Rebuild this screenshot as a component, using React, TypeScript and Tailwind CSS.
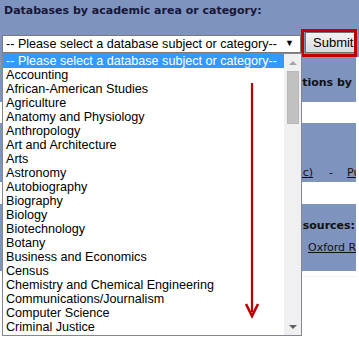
import React from 'react';

const subjects = [
  '-- Please select a database subject or category--',
  'Accounting',
  'African-American Studies',
  'Agriculture',
  'Anatomy and Physiology',
  'Anthropology',
  'Art and Architecture',
  'Arts',
  'Astronomy',
  'Autobiography',
  'Biography',
  'Biology',
  'Biotechnology',
  'Botany',
  'Business and Economics',
  'Census',
  'Chemistry and Chemical Engineering',
  'Communications/Journalism',
  'Computer Science',
  'Criminal Justice',
];

const SubjectList = () => (
  <div className="absolute left-[2px] top-[53px] w-[300px] h-[283px] flex border border-[#828790] bg-white font-['Liberation_Sans',Arial,sans-serif] text-[12.6px] text-black">
    <ul className="w-[281px] overflow-hidden">
      {subjects.map((s, i) => (
        <li
          key={s}
          className={`h-[14px] leading-[14px] pl-[3px] whitespace-nowrap ${i === 0 ? 'bg-[#3399ff] text-white' : ''}`}
        >
          {s}
        </li>
      ))}
    </ul>
    {/* scrollbar */}
    <div className="w-[17px] bg-[#f0f0f0] flex flex-col items-center">
      <div className="h-[17px] flex items-center justify-center">
        <div className="w-0 h-0 border-l-[4px] border-r-[4px] border-b-[4px] border-l-transparent border-r-transparent border-b-[#a3a3a3]" />
      </div>
      <div className="w-[12px] h-[53px] bg-[#c1c1c1] border border-[#b8b8b8]" />
      <div className="flex-1" />
      <div className="h-[17px] flex items-center justify-center">
        <div className="w-0 h-0 border-l-[4px] border-r-[4px] border-t-[4px] border-l-transparent border-r-transparent border-t-[#606060]" />
      </div>
    </div>
  </div>
);

export default function App() {
  return (
    <div className="relative w-[359px] h-[338px] overflow-hidden bg-white">
      {/* header + form */}
      <div className="bg-[#7f93bf] h-[57px] pt-[4px]">
        <h2 className="pl-[4px] font-['DejaVu_Sans',Verdana,sans-serif] font-bold text-[11px] leading-[14px] text-[#161638]">
          Databases by academic area or category:
        </h2>
        <div className="flex items-start mt-[11px] pl-[2px]">
          <div className="mt-[6px] w-[299px] h-[18px] bg-white border border-[#7a7a7a] flex items-center justify-between pl-[3px] pr-[6px] font-['Liberation_Sans',Arial,sans-serif] text-[12.6px] text-black whitespace-nowrap">
            <span>-- Please select a database subject or category--</span>
            <span className="text-[9px]">▼</span>
          </div>
          <div className="w-[56px] h-[28px] border-[3px] border-[#c00000] overflow-hidden">
            <div className="ml-[1px] w-[60px] h-[21px] border border-[#707070] bg-gradient-to-b from-[#f2f2f2] to-[#dddddd] pl-[7px] font-['Liberation_Sans',Arial,sans-serif] text-[13px] leading-[19px] text-black">
              Submit
            </div>
          </div>
        </div>
      </div>

      {/* page content behind the open list */}
      <div className="mr-[3px] flex flex-col font-['DejaVu_Sans',Verdana,sans-serif] text-[11px] text-[#111]">
        <div className="h-[45px] bg-[#7f93bf] pt-[19px] pr-[4px] text-right font-bold whitespace-nowrap overflow-hidden leading-[14px]">
          Search by publications by
        </div>
        <div className="h-[21px] bg-white" />
        <div className="h-[59px] bg-[#7f93bf] pt-[43px] flex whitespace-nowrap overflow-hidden leading-[14px]">
          <span className="w-[313px] shrink-0 text-right underline">Academic (Basic)</span>
          <span className="ml-[16px]">-</span>
          <span className="ml-[14px] underline">Public</span>
        </div>
        <div className="h-[22px] bg-white" />
        <div className="h-[67px] bg-[#7f93bf] pt-[15px] overflow-hidden whitespace-nowrap leading-[14px]">
          <div className="text-right pr-[1px] font-bold">Reference sources:</div>
          <div className="pl-[308px] mt-[8px] underline">Oxford Reference</div>
        </div>
        <div className="h-[5px] bg-white" />
        <div className="h-[1px] bg-[#f2f2f2] ml-[300px]" />
      </div>

      <SubjectList />

      {/* red annotation arrow */}
      <svg className="absolute left-[240px] top-[80px]" width="24" height="240" viewBox="0 0 24 240">
        <line x1="12" y1="3" x2="12" y2="232" stroke="#c00000" strokeWidth="2.2" />
        <polyline points="6,224 12,236 18,224" fill="none" stroke="#c00000" strokeWidth="2.6" strokeLinejoin="miter" />
      </svg>
    </div>
  );
}
